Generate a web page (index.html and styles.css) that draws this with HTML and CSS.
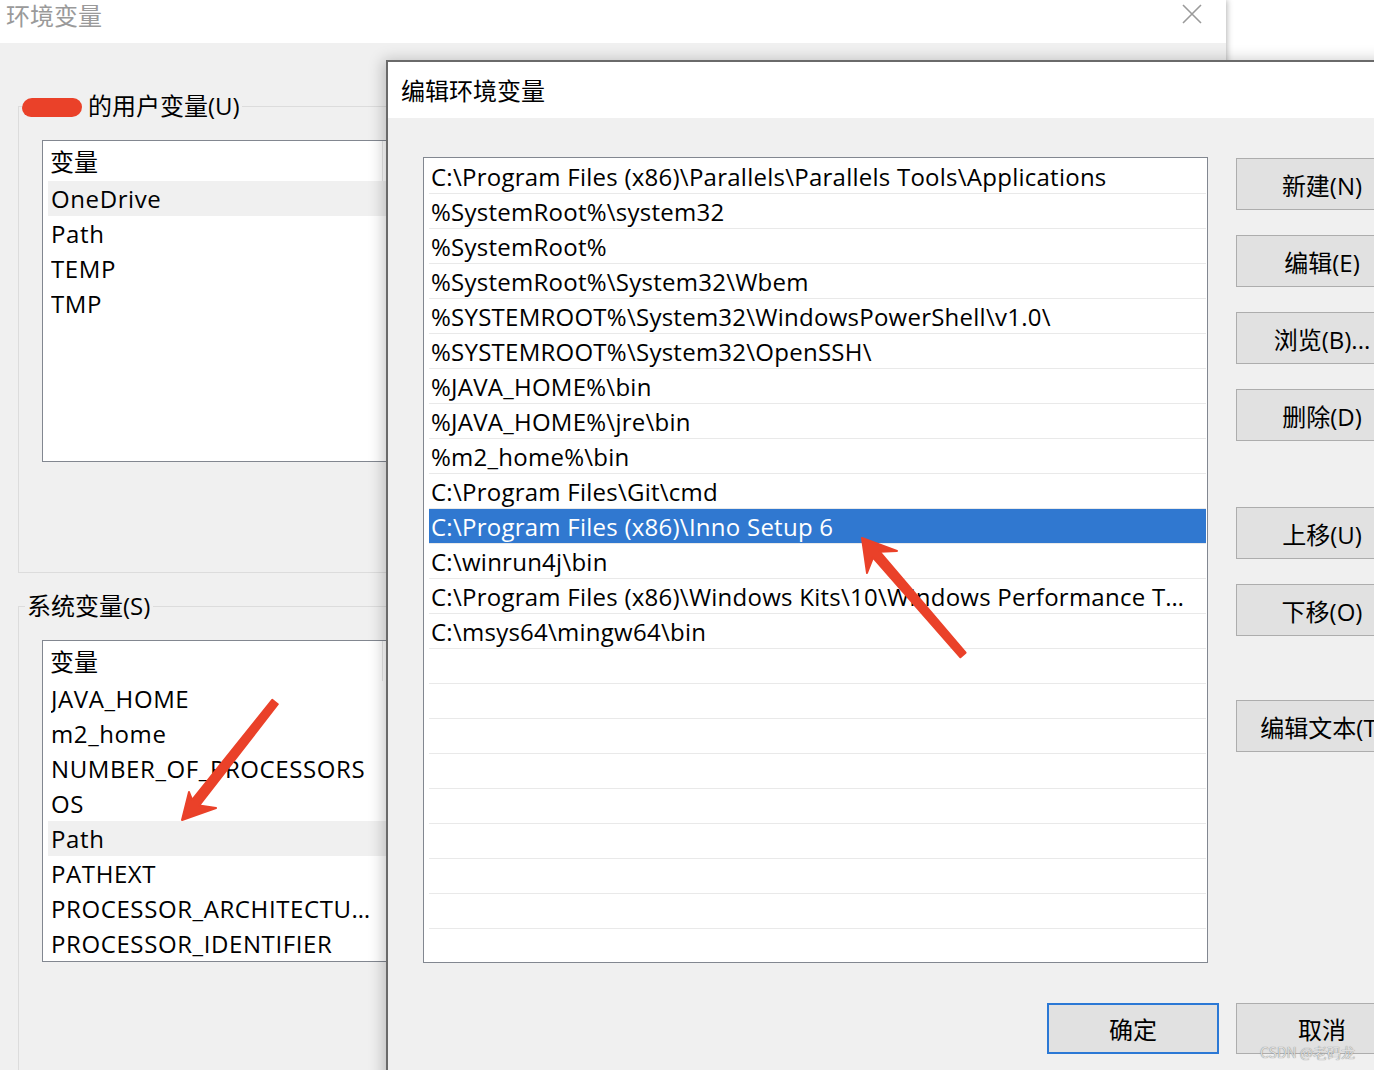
FILE: index.html
```html
<!DOCTYPE html>
<html lang="zh-CN">
<head>
<meta charset="utf-8">
<title>编辑环境变量</title>
<link rel="stylesheet" href="styles.css">
</head>
<body>
<div class="desktop">
  <section class="win-back">
    <header class="back-title">
      <span class="title">环境变量</span>
      <svg class="close" viewBox="0 0 20 20" width="20" height="20"><path d="M1 1 L19 19 M19 1 L1 19" stroke="#9a9a9a" stroke-width="1.6" fill="none"/></svg>
    </header>
    <div class="back-body">
      <fieldset class="group user">
        <legend class="lg1"><span class="redact"></span>的用户变量(U)</legend>
        <div class="varlist">
          <div class="vhead"><span class="hc">变量</span></div>
          <div class="vrow sel"><span>OneDrive</span></div>
          <div class="vrow"><span>Path</span></div>
          <div class="vrow"><span>TEMP</span></div>
          <div class="vrow"><span>TMP</span></div>
        </div>
      </fieldset>
      <fieldset class="group sys">
        <legend class="lg2">系统变量(S)</legend>
        <div class="varlist">
          <div class="vhead"><span class="hc">变量</span></div>
          <div class="vrow"><span>JAVA_HOME</span></div>
          <div class="vrow"><span>m2_home</span></div>
          <div class="vrow"><span>NUMBER_OF_PROCESSORS</span></div>
          <div class="vrow"><span>OS</span></div>
          <div class="vrow sel"><span>Path</span></div>
          <div class="vrow"><span>PATHEXT</span></div>
          <div class="vrow"><span>PROCESSOR_ARCHITECTURE</span></div>
          <div class="vrow"><span>PROCESSOR_IDENTIFIER</span></div>
        </div>
      </fieldset>
    </div>
  </section>

  <section class="win-front">
    <header class="front-title">编辑环境变量</header>
    <div class="front-body">
      <div class="main">
        <div class="pathlist">
          <div class="prow">C:\Program Files (x86)\Parallels\Parallels Tools\Applications</div>
          <div class="prow">%SystemRoot%\system32</div>
          <div class="prow">%SystemRoot%</div>
          <div class="prow">%SystemRoot%\System32\Wbem</div>
          <div class="prow">%SYSTEMROOT%\System32\WindowsPowerShell\v1.0\</div>
          <div class="prow">%SYSTEMROOT%\System32\OpenSSH\</div>
          <div class="prow">%JAVA_HOME%\bin</div>
          <div class="prow">%JAVA_HOME%\jre\bin</div>
          <div class="prow">%m2_home%\bin</div>
          <div class="prow">C:\Program Files\Git\cmd</div>
          <div class="prow sel">C:\Program Files (x86)\Inno Setup 6</div>
          <div class="prow">C:\winrun4j\bin</div>
          <div class="prow">C:\Program Files (x86)\Windows Kits\10\Windows Performance Toolkit\</div>
          <div class="prow">C:\msys64\mingw64\bin</div>
          <div class="prow"></div>
          <div class="prow"></div>
          <div class="prow"></div>
          <div class="prow"></div>
          <div class="prow"></div>
          <div class="prow"></div>
          <div class="prow"></div>
          <div class="prow"></div>
          <div class="prow"></div>
        </div>
        <div class="btncol">
          <button class="btn">新建(N)</button>
          <button class="btn">编辑(E)</button>
          <button class="btn">浏览(B)...</button>
          <button class="btn">删除(D)</button>
          <button class="btn gap-a">上移(U)</button>
          <button class="btn">下移(O)</button>
          <button class="btn gap-b">编辑文本(T)</button>
        </div>
      </div>
      <div class="footer">
        <button class="btn fbtn default">确定</button>
        <button class="btn fbtn">取消</button>
      </div>
    </div>
  </section>

  <svg class="annot" viewBox="0 0 1374 1070" width="1374" height="1070">
    <polygon points="182,820 189,792 192.1,799.9 272.2,699.8 277.8,704.2 199.2,805.5 216,808" fill="#ea4129" stroke="#ea4129" stroke-width="2" stroke-linejoin="round"/>
    <polygon points="862,538 897,551 879.8,551.8 965.6,652.7 960.4,657.3 873,557.6 867,573" fill="#ea4129" stroke="#ea4129" stroke-width="2" stroke-linejoin="round"/>
  </svg>
  <div class="watermark">CSDN @老码龙</div>
</div>
</body>
</html>
```
FILE: styles.css
```css
* { box-sizing: border-box; }
html, body { margin: 0; padding: 0; }
body {
  width: 1374px;
  height: 1070px;
  overflow: hidden;
  background: #ffffff;
  font-family: "Open Sans", "Noto Sans CJK SC", sans-serif;
  color: #000;
}
.desktop {
  position: relative;
  width: 1374px;
  height: 1070px;
  overflow: hidden;
}

/* background window */
.win-back {
  position: absolute;
  left: 0;
  top: 0;
  width: 1226px;
  height: 1070px;
  background: #f0f0f0;
  box-shadow: 1px 0 6px rgba(0, 0, 0, 0.3);
}
.back-title {
  height: 43px;
  background: #fff;
  display: flex;
  justify-content: space-between;
  align-items: flex-start;
}
.back-title .title {
  font-family: "Noto Sans CJK SC", sans-serif;
  font-size: 24px;
  line-height: 30px;
  color: #9a9a9a;
  padding-left: 6px;
}
.close {
  display: block;
  margin: 4px 24px 0 0;
}
.back-body {
  padding-left: 18px;
}
.group {
  margin: 48px 0 0 0;
  padding: 19px 0 110px 0;
  border: 1px solid #dcdcdc;
  width: 1150px;
  min-width: 0;
}
.group.sys {
  margin-top: 18px;
  padding-bottom: 200px;
}
.group legend {
  font-size: 24px;
  line-height: 30px;
  margin-left: 6px;
  padding: 0 2px;
}
.group legend.lg2 { padding-right: 3px; }
.redact {
  display: inline-block;
  width: 60px;
  height: 19px;
  margin: 0 6px 0 -5px;
  background: #ea4129;
  border-radius: 10px 9px 10px 9px;
  vertical-align: -2px;
}
.varlist {
  margin-left: 23px;
  width: 700px;
  height: 322px;
  border: 1px solid #828790;
  background: #fff;
  overflow: hidden;
}
.vhead {
  height: 40px;
  display: flex;
}
.vhead .hc {
  width: 340px;
  padding-left: 7px;
  font-size: 24px;
  line-height: 42px;
  border-right: 1px solid #e5e5e5;
}
.vrow {
  height: 35px;
  margin-left: 5px;
  padding-left: 3px;
  font-size: 24px;
  line-height: 35px;
  letter-spacing: 0.6px;
}
.vrow span {
  display: block;
  width: 323px;
  white-space: nowrap;
  overflow: hidden;
  text-overflow: ellipsis;
}
.vrow.sel { background: #f0f0f0; }

/* front dialog */
.win-front {
  position: absolute;
  left: 386px;
  top: 60px;
  width: 1100px;
  height: 1100px;
  background: #f0f0f0;
  border-top: 2px solid #6a6a6a;
  border-left: 2px solid #6a6a6a;
  box-shadow: -3px 0 14px rgba(0, 0, 0, 0.22);
}
.front-title {
  height: 56px;
  background: #fff;
  padding-left: 13px;
  font-family: "Noto Sans CJK SC", sans-serif;
  font-size: 24px;
  line-height: 56px;
}
.front-body {
  padding: 39px 0 0 35px;
}
.main {
  display: flex;
  align-items: flex-start;
  gap: 28px;
  width: 985px;
}
.pathlist {
  width: 785px;
  height: 806px;
  border: 1px solid #828790;
  background: #fff;
  padding-top: 1px;
  overflow: hidden;
}
.prow {
  height: 35px;
  margin: 0 1px 0 5px;
  padding: 0 10px 0 2px;
  border-bottom: 1px solid #e9e9e9;
  font-size: 24px;
  line-height: 35px;
  letter-spacing: 0.25px;
  white-space: nowrap;
  overflow: hidden;
  text-overflow: ellipsis;
}
.prow.sel {
  background: #3078d0;
  color: #fff;
}
.btncol {
  display: flex;
  flex-direction: column;
  gap: 25px;
  margin-top: 1px;
}
.btn {
  width: 172px;
  height: 52px;
  margin: 0;
  padding: 0;
  background: #e1e1e1;
  border: 1px solid #adadad;
  border-radius: 0;
  font-family: "Open Sans", "Noto Sans CJK SC", sans-serif;
  font-size: 24px;
  color: #000;
  display: flex;
  align-items: center;
  justify-content: center;
  white-space: nowrap;
}
.btn.gap-a { margin-top: 41px; }
.btn.gap-b { margin-top: 39px; }
.footer {
  display: flex;
  justify-content: flex-end;
  gap: 17px;
  width: 985px;
  margin-top: 40px;
}
.fbtn { height: 51px; }
.fbtn.default { border: 2px solid #2b78d5; }

.annot {
  position: absolute;
  left: 0;
  top: 0;
  pointer-events: none;
}
.watermark {
  position: absolute;
  left: 1260px;
  top: 1042px;
  font-family: "Noto Sans CJK SC", sans-serif;
  font-size: 14px;
  line-height: 20px;
  color: #dedede;
  text-shadow: 0 0 1px #6a6a6a;
}
```
